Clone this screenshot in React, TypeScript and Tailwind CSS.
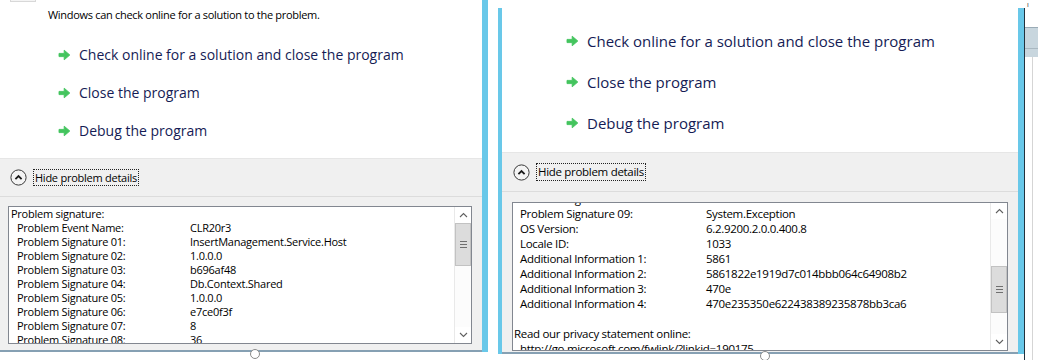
import React from "react";

type Row = [string, string];

const leftRows: Row[] = [
  ["Problem Event Name:", "CLR20r3"],
  ["Problem Signature 01:", "InsertManagement.Service.Host"],
  ["Problem Signature 02:", "1.0.0.0"],
  ["Problem Signature 03:", "b696af48"],
  ["Problem Signature 04:", "Db.Context.Shared"],
  ["Problem Signature 05:", "1.0.0.0"],
  ["Problem Signature 06:", "e7ce0f3f"],
  ["Problem Signature 07:", "8"],
  ["Problem Signature 08:", "36"],
];

const rightRows: Row[] = [
  ["Problem Signature 08:", "36"],
  ["Problem Signature 09:", "System.Exception"],
  ["OS Version:", "6.2.9200.2.0.0.400.8"],
  ["Locale ID:", "1033"],
  ["Additional Information 1:", "5861"],
  ["Additional Information 2:", "5861822e1919d7c014bbb064c64908b2"],
  ["Additional Information 3:", "470e"],
  ["Additional Information 4:", "470e235350e622438389235878bb3ca6"],
];

const links = [
  "Check online for a solution and close the program",
  "Close the program",
  "Debug the program",
];

const GreenArrow = () => (
  <svg width="13" height="12" viewBox="0 0 13 12" className="shrink-0">
    <path
      d="M1 4.4 H6.2 V1.2 L11.8 6 L6.2 10.8 V7.6 H1 Z"
      fill="#43c45d"
      stroke="#43c45d"
      strokeWidth="0.9"
      strokeLinejoin="round"
    />
  </svg>
);

const ChevronCircle = () => (
  <svg width="17" height="17" viewBox="0 0 17 17" className="shrink-0">
    <circle cx="8.5" cy="8.5" r="7.6" fill="#f4f4f4" stroke="#3a3a3a" strokeWidth="1" />
    <path d="M5.4 10.1 L8.5 7 L11.6 10.1" fill="none" stroke="#1b1b1b" strokeWidth="1.8" />
  </svg>
);

const ScrollArrow = ({ up }: { up?: boolean }) => (
  <div className="flex h-[16px] items-center justify-center bg-white">
    <svg width="9" height="6" viewBox="0 0 9 6">
      <path
        d={up ? "M1 5 L4.5 1.5 L8 5" : "M1 1 L4.5 4.5 L8 1"}
        fill="none"
        stroke="#606060"
        strokeWidth="1.1"
      />
    </svg>
  </div>
);

const ScrollBar = ({ before, thumb }: { before: string; thumb: string }) => (
  <div className="flex w-[17px] shrink-0 flex-col border-l border-[#e9e9e9] bg-[#fcfcfc]">
    <ScrollArrow up />
    <div className={before} />
    <div
      className={`flex items-center justify-center border border-[#c2c2c2] bg-[#dcdcdc] ${thumb}`}
    >
      <div className="flex flex-col gap-[2px]">
        <div className="h-px w-[7px] bg-[#6f6f6f]" />
        <div className="h-px w-[7px] bg-[#6f6f6f]" />
        <div className="h-px w-[7px] bg-[#6f6f6f]" />
      </div>
    </div>
    <div className="flex-1" />
    <ScrollArrow />
  </div>
);

const LeftDialog = () => (
  <div className="flex h-[352px] w-[488px] shrink-0 border-r-[6px] border-[#69c8e9]">
    <div className="flex min-w-0 flex-1 flex-col border-b-2 border-[#86a0b3]">
      <div className="h-[158px] bg-white">
        <div className="ml-[10px] h-[2px] w-[26px] border-x border-b border-[#d8d8d8] bg-[#f4f4f4]" />
        <p className="ml-[48px] mt-[5px] text-[11px] leading-[16px] tracking-[-0.3px] text-black">
          Windows can check online for a solution to the problem.
        </p>
        <div className="mt-[22px] flex flex-col gap-[18px] pl-[58px]">
          {links.map(l => (
            <div key={l} className="flex h-[20px] items-center gap-[8px]">
              <GreenArrow />
              <span className="text-[14px] leading-[20px] text-[#151c55]">{l}</span>
            </div>
          ))}
        </div>
      </div>
      <div className="flex flex-1 flex-col border-t border-[#e6e6e6] bg-[#f0f0f0]">
        <div className="flex h-[37px] items-center gap-[6px] pl-[10px]">
          <ChevronCircle />
          <span className="border border-dotted border-[#222] px-px text-[11px] leading-[15px] tracking-[-0.25px] text-black">
            Hide problem details
          </span>
        </div>
        <div className="h-px bg-[#dcdcdc]" />
        <div className="pl-[8px] pr-[10px] pt-[9px]">
          <div className="flex h-[138px] border border-[#828790] bg-white">
            <div className="min-w-0 flex-1 overflow-hidden pl-[2px] text-[11px] leading-[14px] tracking-[-0.25px] text-black">
              <div>Problem signature:</div>
              {leftRows.map(([k, v]) => (
                <div key={k} className="flex pl-[6px]">
                  <span className="w-[173px] shrink-0">{k}</span>
                  <span>{v}</span>
                </div>
              ))}
            </div>
            <ScrollBar before="h-0" thumb="h-[43px]" />
          </div>
        </div>
      </div>
    </div>
  </div>
);

const RightDialog = () => (
  <div className="ml-[10px] mt-[8px] flex h-[346px] w-[526px] shrink-0 border-l-4 border-r-[6px] border-[#69c8e9]">
    <div className="flex min-w-0 flex-1 flex-col border-b-2 border-[#86a0b3]">
      <div className="h-[144px] bg-white pl-[64px] pt-[22px]">
        <div className="flex flex-col gap-[19px]">
          {links.map(l => (
            <div key={l} className="flex h-[22px] items-center gap-[8px]">
              <GreenArrow />
              <span className="text-[15px] leading-[22px] text-[#151c55]">{l}</span>
            </div>
          ))}
        </div>
      </div>
      <div className="flex flex-1 flex-col border-t border-[#e6e6e6] bg-[#f0f0f0]">
        <div className="flex h-[38px] items-center gap-[6px] pl-[11px]">
          <ChevronCircle />
          <span className="border border-dotted border-[#222] px-px text-[11.5px] leading-[16px] tracking-[-0.3px] text-black">
            Hide problem details
          </span>
        </div>
        <div className="h-px bg-[#dcdcdc]" />
        <div className="pl-[10px] pr-[10px] pt-[10px]">
          <div className="flex h-[149px] border border-[#828790] bg-white">
            <div className="min-w-0 flex-1 overflow-hidden pl-px text-[11.5px] leading-[15px] tracking-[-0.3px] text-black">
              <div className="-mt-[12px]">
                {rightRows.map(([k, v]) => (
                  <div key={k} className="flex pl-[6px]">
                    <span className="w-[186px] shrink-0">{k}</span>
                    <span>{v}</span>
                  </div>
                ))}
                <div className="h-[15px]" />
                <div>Read our privacy statement online:</div>
                <div className="pl-[6px]">http://go.microsoft.com/fwlink/?linkid=190175</div>
              </div>
            </div>
            <ScrollBar before="h-[47px]" thumb="h-[47px]" />
          </div>
        </div>
      </div>
    </div>
  </div>
);

const EdgeWindow = () => (
  <div className="mt-[8px] flex shrink-0">
    <div className="w-px bg-[#22323d]" />
    <div className="-mt-[8px] flex w-[13px] flex-col bg-white">
      <div className="h-[27px] pl-[2px] text-[7px] leading-[10px] text-[#333]">ı</div>
      <div className="h-[30px] border-t border-[#9aabb6] bg-[#c8d6de]">
        <div className="mt-[20px] border-t border-[#a9b8c1]" />
      </div>
      <div className="flex flex-1">
        <div className="w-[7px]" />
        <div className="flex-1 border-l border-[#d5d5d5] bg-white" />
      </div>
    </div>
  </div>
);

const Handle = ({ className }: { className: string }) => (
  <div
    className={`absolute h-[10px] w-[10px] rounded-full border border-[#8a8a8a] bg-white ${className}`}
  />
);

export default function App() {
  return (
    <div
      className="relative flex h-[360px] w-[1039px] overflow-hidden bg-white"
      style={{ fontFamily: '"Open Sans", "Noto Sans", sans-serif' }}
    >
      <LeftDialog />
      <RightDialog />
      <EdgeWindow />
      <Handle className="left-[250px] top-[349px]" />
      <Handle className="left-[760px] top-[351px]" />
    </div>
  );
}
